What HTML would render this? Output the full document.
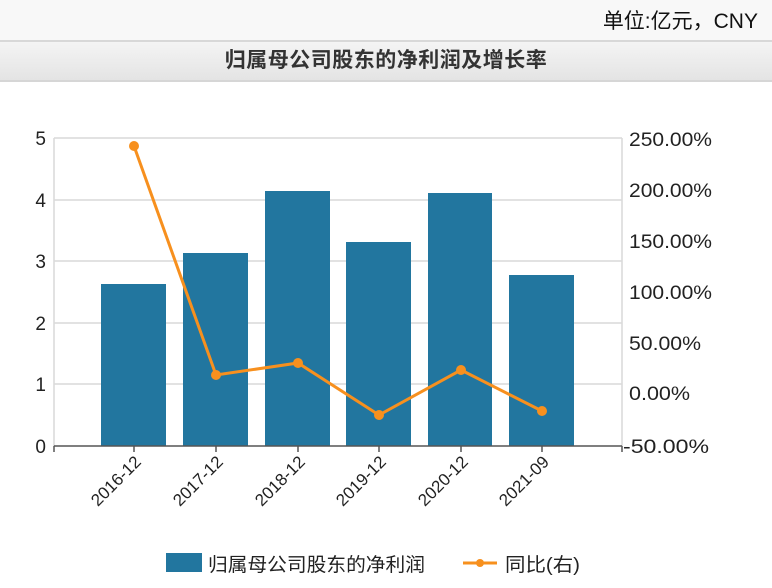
<!DOCTYPE html>
<html><head><meta charset="utf-8"><style>
body{margin:0;width:772px;height:588px;background:#fff;overflow:hidden;font-family:"Liberation Sans","Noto Sans CJK SC",sans-serif;}
.top{position:absolute;left:0;top:0;width:772px;height:40px;background:#f8f8f8;}
.unit{position:absolute;right:14px;top:5px;font-size:21px;color:#111;}
.hdr{position:absolute;left:0;top:40px;width:772px;height:42px;background:linear-gradient(#f4f4f4,#e4e4e4);border-top:2px solid #d8d8d8;border-bottom:2px solid #d6d6d6;box-sizing:border-box;text-align:center;line-height:38px;font-size:21px;font-weight:bold;color:#333;letter-spacing:0.5px;}
</style></head><body>
<div class="top"><div class="unit">单位:亿元，CNY</div></div>
<div class="hdr">归属母公司股东的净利润及增长率</div>
<svg width="772" height="588" style="position:absolute;left:0;top:0" font-family="Liberation Sans, Noto Sans CJK SC, sans-serif">
<g stroke="#d9d9d9" stroke-width="1.5">
<line x1="54" x2="622" y1="138" y2="138"/><line x1="54" x2="622" y1="200" y2="200"/>
<line x1="54" x2="622" y1="261" y2="261"/><line x1="54" x2="622" y1="323" y2="323"/>
<line x1="54" x2="622" y1="384" y2="384"/>
<line x1="54" x2="54" y1="138" y2="446"/><line x1="622" x2="622" y1="138" y2="446"/>
</g>
<g fill="#22769f">
<rect x="101" y="284" width="65" height="162"/><rect x="183" y="253" width="65" height="193"/>
<rect x="265" y="191" width="65" height="255"/><rect x="346" y="242" width="65" height="204"/>
<rect x="428" y="193" width="64" height="253"/><rect x="509" y="275" width="65" height="171"/>
</g>
<g stroke="#555" stroke-width="1.5">
<line x1="54" x2="622" y1="446" y2="446"/>
<line x1="54" x2="54" y1="446" y2="452"/><line x1="134" x2="134" y1="446" y2="452"/><line x1="216" x2="216" y1="446" y2="452"/><line x1="298" x2="298" y1="446" y2="452"/><line x1="379" x2="379" y1="446" y2="452"/><line x1="461" x2="461" y1="446" y2="452"/><line x1="542" x2="542" y1="446" y2="452"/><line x1="622" x2="622" y1="446" y2="452"/>
</g>
<polyline points="134,146 216,375 298,363 379,415 461,370 542,411" fill="none" stroke="#f7901e" stroke-width="3"/>
<g fill="#f7901e"><circle cx="134" cy="146" r="5"/><circle cx="216" cy="375" r="5"/><circle cx="298" cy="363" r="5"/><circle cx="379" cy="415" r="5"/><circle cx="461" cy="370" r="5"/><circle cx="542" cy="411" r="5"/></g>
<g font-size="19" fill="#222" text-anchor="end">
<text x="46" y="145">5</text><text x="46" y="207">4</text><text x="46" y="268">3</text><text x="46" y="330">2</text><text x="46" y="391">1</text><text x="46" y="453">0</text>
</g>
<g font-size="19" fill="#222">
<text x="629" y="146" textLength="83" lengthAdjust="spacingAndGlyphs">250.00%</text><text x="629" y="197" textLength="83" lengthAdjust="spacingAndGlyphs">200.00%</text><text x="629" y="248" textLength="83" lengthAdjust="spacingAndGlyphs">150.00%</text><text x="629" y="299" textLength="83" lengthAdjust="spacingAndGlyphs">100.00%</text><text x="629" y="350" textLength="72" lengthAdjust="spacingAndGlyphs">50.00%</text><text x="629" y="400" textLength="61" lengthAdjust="spacingAndGlyphs">0.00%</text><text x="623" y="453" textLength="86" lengthAdjust="spacingAndGlyphs">-50.00%</text>
</g>
<g font-size="17" fill="#222" text-anchor="end">
<text transform="translate(142,463) rotate(-45)">2016-12</text>
<text transform="translate(224,463) rotate(-45)">2017-12</text>
<text transform="translate(306,463) rotate(-45)">2018-12</text>
<text transform="translate(387,463) rotate(-45)">2019-12</text>
<text transform="translate(469,463) rotate(-45)">2020-12</text>
<text transform="translate(550,463) rotate(-45)">2021-09</text>
</g>
<rect x="166" y="553" width="36" height="19" fill="#22769f"/>
<text x="208" y="571" font-size="19" fill="#222" textLength="217" lengthAdjust="spacingAndGlyphs">归属母公司股东的净利润</text>
<line x1="463" x2="497" y1="563" y2="563" stroke="#f7901e" stroke-width="3"/>
<circle cx="480" cy="563" r="4" fill="#f7901e"/>
<text x="505" y="571" font-size="19" fill="#222" textLength="75" lengthAdjust="spacingAndGlyphs">同比(右)</text>
</svg>
</body></html>
